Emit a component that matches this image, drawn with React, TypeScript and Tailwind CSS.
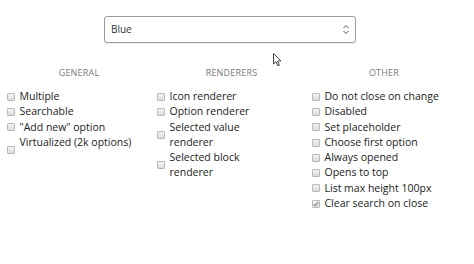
import React from "react";

const general = [
  { label: "Multiple" },
  { label: "Searchable" },
  { label: "\"Add new\" option" },
  { label: "Virtualized (2k options)", extraLine: true },
];

const renderers = [
  { label: "Icon renderer" },
  { label: "Option renderer" },
  { label: "Selected value renderer" },
  { label: "Selected block renderer" },
];

const other = [
  { label: "Do not close on change" },
  { label: "Disabled" },
  { label: "Set placeholder" },
  { label: "Choose first option" },
  { label: "Always opened" },
  { label: "Opens to top" },
  { label: "List max height 100px" },
  { label: "Clear search on close", checked: true },
];

type Opt = { label: string; checked?: boolean; extraLine?: boolean };

function Box({ checked }: { checked?: boolean }) {
  return (
    <span className="flex h-[8px] w-[8px] shrink-0 items-center justify-center rounded-[1px] border border-[#b9b9b9] bg-gradient-to-b from-[#f4f4f4] to-[#dcdcdc]">
      {checked && (
        <svg width="6" height="6" viewBox="0 0 6 6">
          <path d="M0.8 3.2 L2.4 4.7 L5.2 1.2" stroke="#8a8a8a" strokeWidth="1.1" fill="none" />
        </svg>
      )}
    </span>
  );
}

function Column({ title, items, textWidth }: { title: string; items: Opt[]; textWidth: string }) {
  return (
    <div className="flex flex-col">
      <div className="mb-[10px] text-center text-[9px] leading-[12px] tracking-[0.2px] text-[#7a7a7a]">
        {title}
      </div>
      <div className="flex flex-col pl-[3px]">
        {items.map((o) => (
          <label key={o.label} className="flex items-center gap-[4.5px] text-[10.5px] leading-[15.3px] text-[#222]">
            <Box checked={o.checked} />
            <span className={textWidth}>
              {o.label}
              {o.extraLine && <br />}
              {o.extraLine && "\u00a0"}
            </span>
          </label>
        ))}
      </div>
    </div>
  );
}

export default function App() {
  return (
    <div
      className="relative h-[264px] w-[474px] bg-white"
      style={{ fontFamily: '"Open Sans", "Noto Sans", sans-serif' }}
    >
      <div className="pt-[16px] pl-[104px]">
        <div className="flex h-[27px] w-[252px] items-center justify-between rounded-[3px] border border-[#9a9a9a] bg-white pl-[6px] pr-[5px] shadow-[0_1px_1px_rgba(0,0,0,0.08)]">
          <span className="text-[10px] text-[#333]">Blue</span>
          <svg width="8" height="11" viewBox="0 0 8 11">
            <path d="M1.5 4 L4 1.5 L6.5 4 M1.5 7 L4 9.5 L6.5 7" stroke="#555" strokeWidth="1" fill="none" />
          </svg>
        </div>
      </div>

      <div className="mt-[24px] grid grid-cols-[150px_155px_150px] pl-[4px]">
        <Column title="GENERAL" items={general} textWidth="max-w-[130px]" />
        <Column title="RENDERERS" items={renderers} textWidth="max-w-[100px]" />
        <Column title="OTHER" items={other} textWidth="max-w-[130px]" />
      </div>

      <svg className="absolute left-[273px] top-[53px]" width="10" height="14" viewBox="0 0 10 14">
        <path d="M0.5 0.5 L0.5 11 L3 8.6 L4.8 12.8 L6.4 12.1 L4.7 8 L8 8 Z" fill="#fff" stroke="#333" strokeWidth="0.9" />
      </svg>
    </div>
  );
}
